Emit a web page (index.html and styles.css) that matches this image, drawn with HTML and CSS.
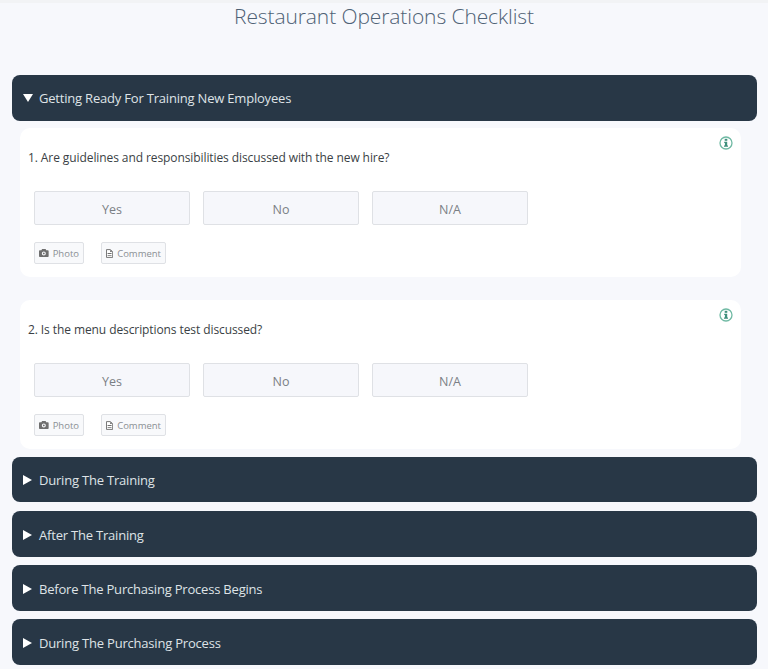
FILE: index.html
```html
<!DOCTYPE html>
<html lang="en">
<head>
<meta charset="utf-8">
<title>Restaurant Operations Checklist</title>
<link rel="stylesheet" href="styles.css">
</head>
<body>
<div class="topline"></div>
<h1 class="title">Restaurant Operations Checklist</h1>
<main class="sections">
  <div class="bar first"><span class="arrow down"></span>Getting Ready For Training New Employees</div>
  <section class="card">
    <svg class="info" viewBox="0 0 14 14" width="14" height="14"><circle cx="7" cy="7" r="6" fill="none" stroke="#6fb9a3" stroke-width="1.3"/><rect x="5.7" y="2.8" width="2.6" height="2" fill="#3f8f7c"/><path d="M5.2 5.8h3v3.8h.8v1.2H5v-1.2h.9V7H5.2z" fill="#3f8f7c"/></svg>
    <p class="question">1. Are guidelines and responsibilities discussed with the new hire?</p>
    <div class="answers"><div class="answer">Yes</div><div class="answer">No</div><div class="answer">N/A</div></div>
    <div class="tools">
      <div class="tool photo"><svg viewBox="0 0 12 10" width="11" height="10"><path d="M0 2.5q0-1 1-1h2L3.8 0h4.4L9 1.5h2q1 0 1 1V9q0 1-1 1H1q-1 0-1-1zM6 3a2.5 2.5 0 1 0 0 5 2.5 2.5 0 0 0 0-5zM6 4.4a1.1 1.1 0 1 1 0 2.2 1.1 1.1 0 0 1 0-2.2z" fill="#6f6f6f" fill-rule="evenodd"/></svg>Photo</div>
      <div class="tool comment"><svg viewBox="0 0 9 11" width="9" height="11"><path d="M.6.6h5L8.4 3.4v7H.6z" fill="#fff" stroke="#6f6f6f" stroke-width="1.2"/><path d="M2 5h5v1.1H2zM2 7.3h5v1.1H2zM5.2.8v2.9H8z" fill="#6f6f6f"/></svg>Comment</div>
    </div>
  </section>
  <section class="card second">
    <svg class="info" viewBox="0 0 14 14" width="14" height="14"><circle cx="7" cy="7" r="6" fill="none" stroke="#6fb9a3" stroke-width="1.3"/><rect x="5.7" y="2.8" width="2.6" height="2" fill="#3f8f7c"/><path d="M5.2 5.8h3v3.8h.8v1.2H5v-1.2h.9V7H5.2z" fill="#3f8f7c"/></svg>
    <p class="question">2. Is the menu descriptions test discussed?</p>
    <div class="answers"><div class="answer">Yes</div><div class="answer">No</div><div class="answer">N/A</div></div>
    <div class="tools">
      <div class="tool photo"><svg viewBox="0 0 12 10" width="11" height="10"><path d="M0 2.5q0-1 1-1h2L3.8 0h4.4L9 1.5h2q1 0 1 1V9q0 1-1 1H1q-1 0-1-1zM6 3a2.5 2.5 0 1 0 0 5 2.5 2.5 0 0 0 0-5zM6 4.4a1.1 1.1 0 1 1 0 2.2 1.1 1.1 0 0 1 0-2.2z" fill="#6f6f6f" fill-rule="evenodd"/></svg>Photo</div>
      <div class="tool comment"><svg viewBox="0 0 9 11" width="9" height="11"><path d="M.6.6h5L8.4 3.4v7H.6z" fill="#fff" stroke="#6f6f6f" stroke-width="1.2"/><path d="M2 5h5v1.1H2zM2 7.3h5v1.1H2zM5.2.8v2.9H8z" fill="#6f6f6f"/></svg>Comment</div>
    </div>
  </section>
  <div class="bar after-cards"><span class="arrow right"></span>During The Training</div>
  <div class="bar"><span class="arrow right"></span>After The Training</div>
  <div class="bar"><span class="arrow right"></span>Before The Purchasing Process Begins</div>
  <div class="bar"><span class="arrow right"></span>During The Purchasing Process</div>
</main>
</body>
</html>
```
FILE: styles.css
```css
* { box-sizing: border-box; }
html, body { margin: 0; height: 669px; overflow: hidden; }
body { background: #f7f8fc; font-family: "Open Sans", "Noto Sans", sans-serif; color: #3a3f45; }
.topline { height: 3px; background: #f2f3f5; }
.title { margin: 0; height: 72px; font-size: 21px; line-height: 26px; font-weight: 300; letter-spacing: -0.1px; text-align: center; color: #4e6175; }
.sections { padding: 0 11px 0 12px; display: flex; flex-direction: column; }
.bar { height: 46px; margin-bottom: 8px; padding-left: 11px; display: flex; align-items: center; background: #283746; border-radius: 8px; color: #dfe3e7; font-size: 13px; letter-spacing: -0.2px; }
.bar + .bar { padding-top: 1px; }
.bar.first { margin-bottom: 7px; }
.after-cards { height: 45px; margin-bottom: 9px; }
.arrow { width: 0; height: 0; display: block; }
.arrow.down { margin-right: 6px; border-left: 5.5px solid transparent; border-right: 5.5px solid transparent; border-top: 8px solid #fff; }
.arrow.right { margin-right: 7px; border-top: 5px solid transparent; border-bottom: 5px solid transparent; border-left: 9px solid #fff; }
.card { position: relative; width: 721px; height: 149px; margin-left: 8px; padding: 21px 8px 0; background: #fff; border-radius: 10px; }
.card.second { margin-top: 23px; margin-bottom: 8px; }
.info { position: absolute; top: 8px; right: 8px; }
.question { margin: 0; height: 42px; font-size: 12px; line-height: 18px; letter-spacing: -0.09px; color: #3a3f45; }
.answers { display: flex; gap: 13px; margin-left: 6px; }
.answer { width: 156px; height: 34px; display: flex; align-items: center; justify-content: center; padding-top: 2px; background: #f6f7fb; border: 1px solid #dfe1e5; border-radius: 2px; font-size: 12.5px; color: #7b7f85; }
.tools { display: flex; gap: 17px; margin: 17px 0 0 6px; }
.tool { height: 22px; display: flex; align-items: center; gap: 4px; padding: 0 4px; background: #f8f9fb; border: 1px solid #dfe1e5; border-radius: 2px; font-size: 9.5px; color: #8b8f94; }
.tool.photo { width: 50px; }
.tool.comment { width: 65px; }
```
